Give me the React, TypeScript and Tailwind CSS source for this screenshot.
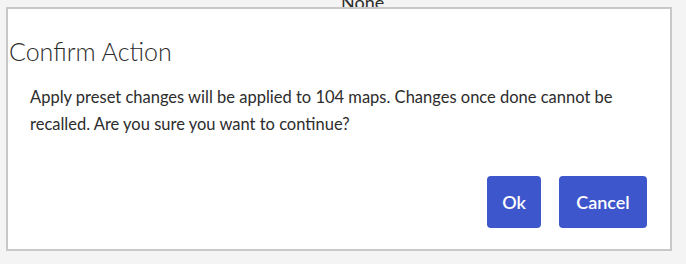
export default function App() {
  return (
    <div className="relative h-[264px] w-[686px] overflow-hidden bg-[#f4f4f4] font-['Lato',sans-serif]">
      <div className="absolute left-[341px] top-[-11px] text-[18px] text-[#2c2c2c]">None</div>

      <div
        role="dialog"
        aria-modal="true"
        className="absolute left-[6px] top-[7px] flex h-[244px] w-[666px] flex-col border-2 border-[#c8c8c8] bg-white"
      >
        <h2 className="mt-[26px] pl-[1px] text-[25px] font-light leading-[32px] text-[#2c2c2c]">Confirm Action</h2>
        <p className="mt-[17px] px-[22px] text-[16.5px] leading-[27px] text-[#2c2c2c]">
          Apply preset changes will be applied to 104 maps. Changes once done cannot be recalled. Are you sure you want
          to continue?
        </p>
        <div className="mt-auto mb-[21px] flex justify-end gap-[18px] pr-[23px]">
          <button
            type="button"
            className="h-[52px] w-[54px] rounded-[4px] bg-[#3e56cb] text-[18px] font-semibold text-white"
          >
            Ok
          </button>
          <button
            type="button"
            className="h-[52px] w-[88px] rounded-[4px] bg-[#3e56cb] text-[18px] font-semibold text-white"
          >
            Cancel
          </button>
        </div>
      </div>
    </div>
  );
}
